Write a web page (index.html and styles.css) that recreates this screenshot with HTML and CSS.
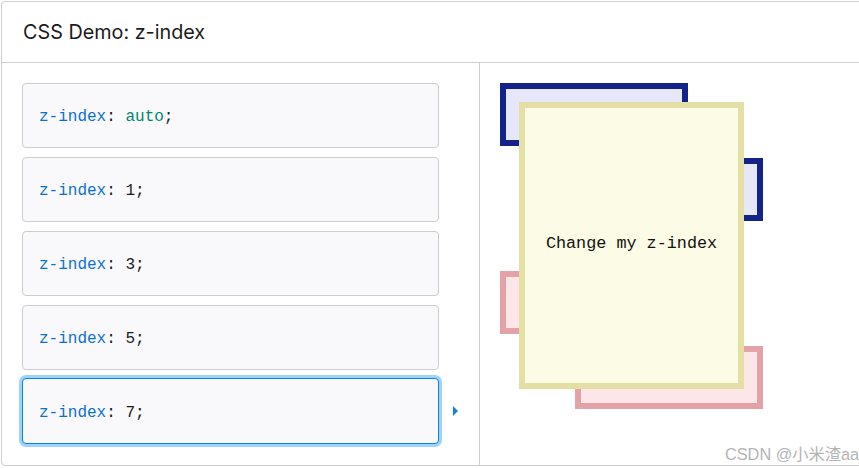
FILE: index.html
```html
<!DOCTYPE html>
<html lang="en">
<head>
<meta charset="utf-8">
<title>CSS Demo: z-index</title>
<link rel="stylesheet" href="styles.css">
</head>
<body>
<div class="frame">
  <header class="head">CSS Demo: z-index</header>
  <div class="body">
    <div class="choices">
      <div class="choice"><code><span class="prop">z-index</span>: <span class="kw">auto</span>;</code></div>
      <div class="choice"><code><span class="prop">z-index</span>: 1;</code></div>
      <div class="choice"><code><span class="prop">z-index</span>: 3;</code></div>
      <div class="choice"><code><span class="prop">z-index</span>: 5;</code></div>
      <div class="choice selected"><code><span class="prop">z-index</span>: 7;</code><span class="arrow"></span></div>
    </div>
    <div class="output">
      <div class="stage">
        <div class="box blue b1"></div>
        <div class="box blue b2"></div>
        <div class="box pink p1"></div>
        <div class="box pink p2"></div>
        <div class="box yellow">Change my z-index</div>
      </div>
    </div>
  </div>
</div>
<div class="watermark">CSDN @小米渣aa</div>
</body>
</html>
```
FILE: styles.css
```css
html, body {
  margin: 0;
  padding: 0;
  background: #ffffff;
  overflow: hidden;
  width: 859px;
  height: 468px;
}
body {
  position: relative;
  font-family: Inter, "Noto Sans", "Liberation Sans", sans-serif;
}
.frame {
  margin: 1px 0 0 1px;
  width: 880px;
  height: 465px;
  border: 1px solid #cfcfcf;
  border-radius: 4px;
  box-sizing: border-box;
  display: flex;
  flex-direction: column;
}
.head {
  height: 61px;
  flex: none;
  box-sizing: border-box;
  border-bottom: 1px solid #cfcfcf;
  display: flex;
  align-items: center;
  padding-left: 21px;
  font-size: 19.8px;
  color: #1b1b1b;
}
.body {
  flex: 1;
  display: flex;
}
.choices {
  width: 478px;
  flex: none;
  box-sizing: border-box;
  border-right: 1px solid #cfcfcf;
  padding: 20px 40px 0 20px;
  display: flex;
  flex-direction: column;
  gap: 9px;
}
.choice {
  position: relative;
  height: 65px;
  box-sizing: border-box;
  border: 1px solid #cdcdcd;
  border-radius: 4px;
  background: #f9f9fb;
  display: flex;
  align-items: center;
  padding: 3px 0 0 16px;
}
.choice code {
  font-family: "Liberation Mono", "DejaVu Sans Mono", monospace;
  font-size: 16px;
  color: #1b1b1b;
}
.prop { color: #0b70d2; }
.kw { color: #00876a; }
.selected {
  border: 1px solid #0d80e8;
  box-shadow: 0 0 0 3px #9cd4fd;
  height: 66px;
  margin-top: -1px;
}
.arrow {
  position: absolute;
  left: 430px;
  top: 27px;
  width: 0;
  height: 0;
  border-top: 5px solid transparent;
  border-bottom: 5px solid transparent;
  border-left: 5px solid #1580e6;
}
.output {
  flex: 1;
  padding: 20px 0 0 20px;
}
.stage {
  position: relative;
  width: 263px;
  height: 325px;
}
.box {
  position: absolute;
  width: 188px;
  height: 63px;
  box-sizing: border-box;
  border: 6px solid;
}
.blue { background: #e6e8fa; border-color: #13238a; }
.pink { background: #fce6e8; border-color: #e3a2a8; }
.b1 { left: 0; top: 0; z-index: 1; }
.b2 { left: 75px; top: 75px; z-index: 3; }
.p1 { left: 0; top: 188px; z-index: 1; }
.p2 { left: 75px; top: 263px; z-index: 3; }
.yellow {
  left: 19px;
  top: 19px;
  width: 225px;
  height: 287px;
  z-index: 7;
  background: #fbfbe6;
  border-color: #e4dfa4;
  display: flex;
  align-items: center;
  justify-content: center;
  padding-bottom: 4px;
  font-family: "Liberation Mono", "DejaVu Sans Mono", monospace;
  font-size: 16.8px;
  color: #111111;
}
.watermark {
  position: absolute;
  left: 725px;
  top: 441px;
  font-family: "Liberation Sans", "Noto Sans CJK SC", sans-serif;
  font-size: 16.3px;
  color: #b4b4b4;
  white-space: nowrap;
  text-shadow: 0 0 1px #ffffff;
}
```
